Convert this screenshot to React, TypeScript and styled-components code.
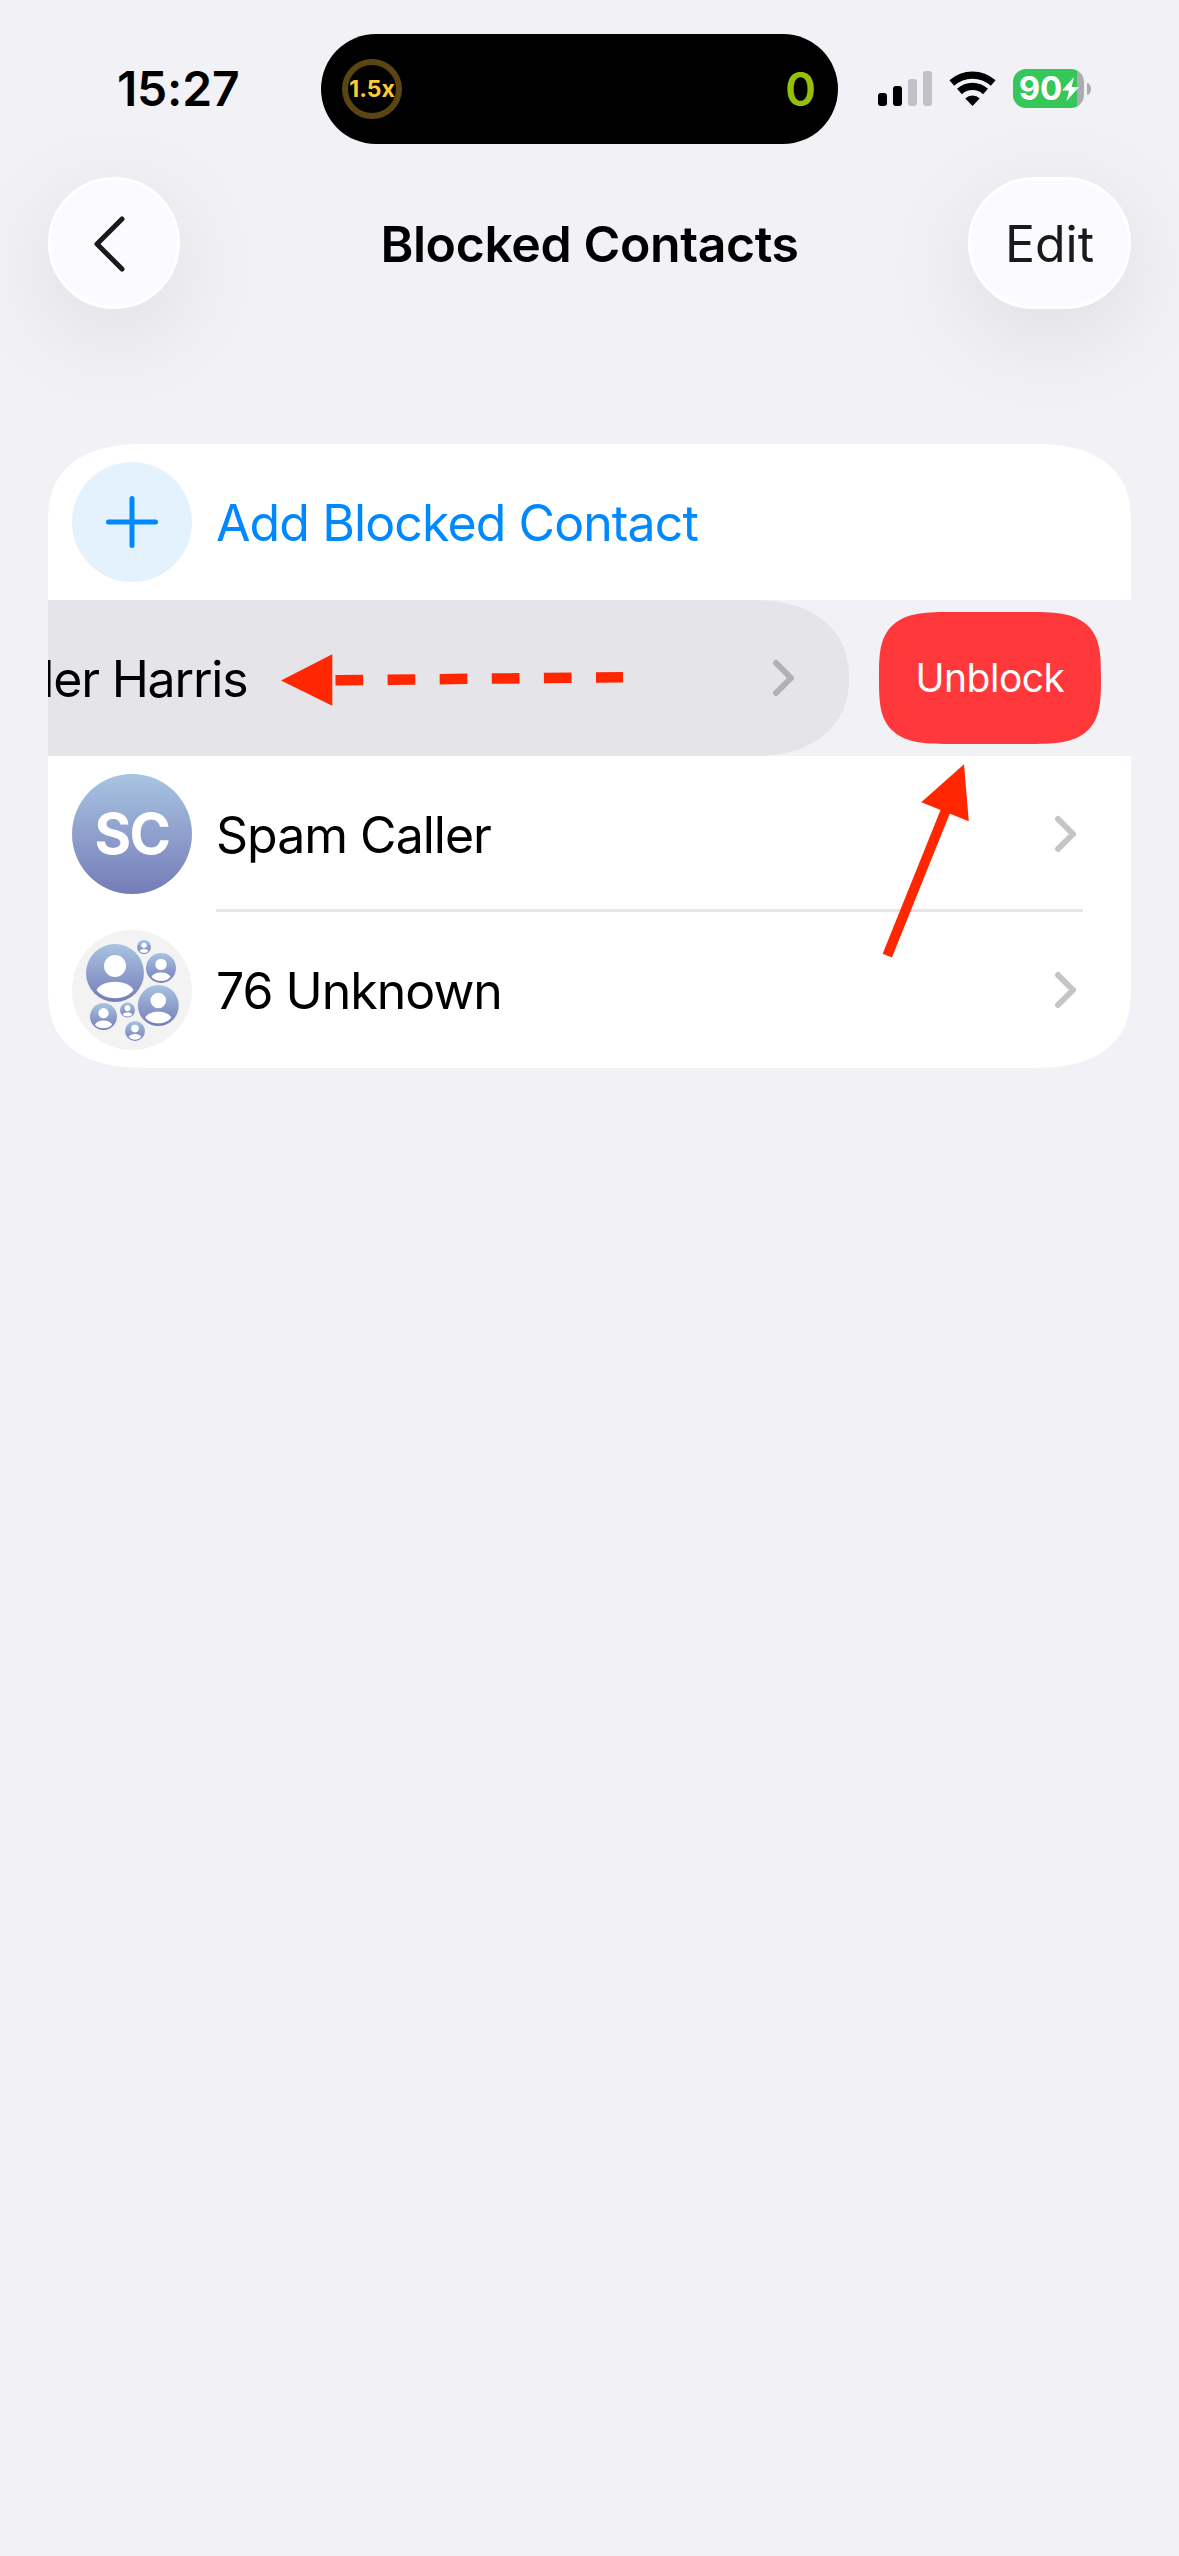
import React from "react";
import styled, { createGlobalStyle } from "styled-components";

const GlobalStyle = createGlobalStyle`
  * { box-sizing: border-box; }
  html, body { margin: 0; padding: 0; background: #f2f1f6; }
  body { font-family: Inter, "Liberation Sans", sans-serif; color: #000; }
`;

const Screen = styled.main`
  position: relative;
  width: 1179px;
  height: 2556px;
  overflow: hidden;
  background: #f2f1f6;
`;

const StatusBar = styled.header`
  display: flex;
  align-items: center;
  height: 144px;
  padding: 34px 0 0 117px;
`;

const Clock = styled.time`
  width: 204px;
  font-size: 48px;
  line-height: 58px;
  font-weight: 600;
  padding-bottom: 1px;
  letter-spacing: -0.2px;
`;

const Island = styled.div`
  display: flex;
  align-items: center;
  justify-content: space-between;
  width: 517px;
  height: 110px;
  padding: 0 22px 0 21px;
  border-radius: 55px;
  background: #000;
`;

const SpeedRing = styled.div`
  display: flex;
  align-items: center;
  justify-content: center;
  width: 60px;
  height: 60px;
  border: 6px solid #5b4613;
  border-radius: 50%;
  color: #fdcb2e;
  font-size: 23px;
  font-weight: 700;
`;

const IslandCount = styled.span`
  color: #98bf08;
  font-size: 47px;
  line-height: 58px;
  font-weight: 600;
`;

const StatusIcons = styled.div`
  display: flex;
  align-items: center;
  height: 40px;
  margin: 0 0 1px 40px;
`;

const Signal = styled.div`
  display: flex;
  align-items: flex-end;
  gap: 6px;
  height: 35px;
`;

const Bar = styled.i<{ $h: number; $on: boolean }>`
  width: 9px;
  height: ${(p) => p.$h}px;
  border-radius: 3px;
  background: ${(p) => (p.$on ? "#000" : "#c2c1c7")};
`;

const WifiIcon = styled.svg`
  margin-left: 17px;
`;

const Battery = styled.div`
  display: flex;
  align-items: center;
  justify-content: center;
  width: 71px;
  height: 39px;
  margin-left: 17px;
  padding-left: 1px;
  border-radius: 13px;
  background: linear-gradient(90deg, #35c759 64px, #acabb1 64px);
  color: #fff;
  font-size: 33px;
  line-height: 39px;
  font-weight: 700;
`;

const BatteryTip = styled.i`
  width: 4px;
  height: 12px;
  margin-left: 3px;
  border-radius: 0 4px 4px 0 / 0 6px 6px 0;
  background: #acabb1;
`;

const NavBar = styled.nav`
  display: flex;
  align-items: center;
  justify-content: space-between;
  margin: 33px 48px 0;
  height: 132px;
`;

const GlassButton = styled.button<{ $w: number }>`
  display: flex;
  align-items: center;
  justify-content: center;
  width: ${(p) => p.$w}px;
  height: 132px;
  padding: 2px 0 0;
  border: 3px solid #fff;
  border-radius: 66px;
  background: #fafaff;
  box-shadow: 0 24px 100px rgba(0, 0, 0, 0.09);
  color: #1a191e;
  font-family: inherit;
  font-size: 50px;
  line-height: 60px;
`;

const BackGlyph = styled.svg`
  margin: 0 9px 0 0;
`;

const Title = styled.h1`
  margin: 2px 0 0 31px;
  font-size: 50px;
  line-height: 60px;
  font-weight: 600;
  letter-spacing: -0.4px;
`;

const Card = styled.section`
  display: flex;
  flex-direction: column;
  margin: 135px 48px 0;
  border-radius: 98px / 78px;
  corner-shape: superellipse(1.3);
  overflow: hidden;
  background: #fff;
`;

const Row = styled.div`
  display: flex;
  align-items: center;
  height: 156px;
  padding-left: 24px;
`;

const RowBody = styled.div<{ $line?: boolean }>`
  display: flex;
  align-items: center;
  justify-content: space-between;
  flex: 1;
  height: 156px;
  margin: 0 48px 0 24px;
  padding-right: 7px;
  box-shadow: ${(p) => (p.$line ? "inset 0 -3px #e6e6e6" : "none")};
`;

const Label = styled.span<{ $accent?: boolean; $tight?: boolean }>`
  padding-top: 2px;
  font-size: 50px;
  line-height: 60px;
  letter-spacing: ${(p) => (p.$tight ? "-1.2px" : p.$accent ? "-0.9px" : "-1px")};
  white-space: nowrap;
  color: ${(p) => (p.$accent ? "#0088ff" : "#000")};
`;

const Circle = styled.div<{ $bg: string }>`
  display: flex;
  align-items: center;
  justify-content: center;
  flex: none;
  width: 120px;
  height: 120px;
  border-radius: 50%;
  background: ${(p) => p.$bg};
  color: #fff;
  font-size: 56px;
  font-weight: 700;
  letter-spacing: -1.5px;
`;

const SwipeRow = styled.div`
  display: flex;
  align-items: center;
  height: 156px;
  overflow: hidden;
  background: #f2f1f6;
`;

const Swiped = styled.div`
  display: flex;
  align-items: center;
  justify-content: space-between;
  flex: none;
  width: 1083px;
  height: 156px;
  margin-left: -282px;
  padding: 0 55px 0 172.5px;
  border-radius: 0 96px 96px 0 / 0 78px 78px 0;
  corner-shape: superellipse(1.18);
  background: #e5e4e9;
`;

const Unblock = styled.button`
  flex: none;
  width: 222px;
  height: 132px;
  margin-left: 30px;
  padding: 0 0 2px;
  border: 0;
  border-radius: 74px / 66px;
  corner-shape: superellipse(1.7);
  background: #ff383c;
  color: #fff;
  font-family: inherit;
  font-size: 39px;
  letter-spacing: -0.5px;
`;

const Annotations = styled.svg`
  position: absolute;
  left: 0;
  top: 0;
  pointer-events: none;
`;

const Chevron = ({ color = "#c5c5c7" }: { color?: string }) => (
  <svg width="22" height="38" viewBox="0 0 22 38" fill="none" stroke={color} strokeWidth="6" strokeLinecap="round" strokeLinejoin="round">
    <path d="M4 4l15 15L4 34" />
  </svg>
);

const PEOPLE: [number, number, number][] = [
  [43, 43, 29], [72, 17, 7], [89, 38, 15], [86.3, 75.5, 20.5], [31.5, 86.5, 13.5], [55.5, 80, 7.5], [63, 101, 10],
];

const People = () => (
  <svg width="120" height="120" viewBox="0 0 120 120">
    <defs>
      <linearGradient id="person" x1="0" y1="0" x2="0" y2="1">
        <stop offset="0" stopColor="#a8c4e1" />
        <stop offset="1" stopColor="#757cb8" />
      </linearGradient>
    </defs>
    {PEOPLE.map(([x, y, r]) => (
      <g key={`${x}`} transform={`translate(${x} ${y}) scale(${r / 29})`}>
        <circle r="29" fill="url(#person)" />
        <circle cy="-7" r="11" fill="#fff" />
        <path d="M-18.500 17C-13 6 13 6 18.500 17C11 28 -11 28 -18.500 17Z" fill="#fff" />
      </g>
    ))}
  </svg>
);

export default function App() {
  return (
    <Screen>
      <GlobalStyle />
      <StatusBar>
        <Clock>15:27</Clock>
        <Island>
          <SpeedRing>1.5x</SpeedRing>
          <IslandCount>0</IslandCount>
        </Island>
        <StatusIcons>
          <Signal>
            <Bar $h={13} $on />
            <Bar $h={20} $on />
            <Bar $h={27} $on={false} />
            <Bar $h={35} $on={false} />
          </Signal>
          <WifiIcon width="47" height="35" viewBox="0 0 47 35">
            <path d="M2.800 12A31 31 0 0 1 44.200 12M10.500 20.500A19 19 0 0 1 36.500 20.500" fill="none" stroke="#000" strokeWidth="7.200" />
            <path d="M16.300 27.400A10.500 10.500 0 0 1 30.700 27.400L23.500 35Z" />
          </WifiIcon>
          <Battery>
            <span>90</span>
            <svg width="17" height="24" viewBox="0 0 17 24" fill="#fff">
              <path d="M12 0L0 13.500H7L4.500 24L17 10H9.500Z" />
            </svg>
          </Battery>
          <BatteryTip />
        </StatusIcons>
      </StatusBar>
      <NavBar>
        <GlassButton $w={132} aria-label="Back">
          <BackGlyph width="32" height="56" viewBox="0 0 32 56" fill="none" stroke="#1a191e" strokeWidth="5" strokeLinecap="round" strokeLinejoin="round">
            <path d="M28 3L3 28L28 53" />
          </BackGlyph>
        </GlassButton>
        <Title>Blocked Contacts</Title>
        <GlassButton $w={163}>Edit</GlassButton>
      </NavBar>
      <Card>
        <Row>
          <Circle $bg="#e4f2fe">
            <svg width="54" height="54" viewBox="0 0 54 54" stroke="#0088ff" strokeWidth="5" strokeLinecap="round">
              <path d="M27 3.500V50.500M3.500 27H50.500" />
            </svg>
          </Circle>
          <RowBody><Label $accent>Add Blocked Contact</Label></RowBody>
        </Row>
        <SwipeRow>
          <Swiped>
            <Label $tight>Xander Harris</Label>
            <Chevron color="#b1b1b5" />
          </Swiped>
          <Unblock>Unblock</Unblock>
        </SwipeRow>
        <Row>
          <Circle $bg="linear-gradient(#a8c4e1, #757cb8)">SC</Circle>
          <RowBody $line><Label>Spam Caller</Label><Chevron /></RowBody>
        </Row>
        <Row>
          <Circle $bg="#f3f3f3"><People /></Circle>
          <RowBody><Label>76 Unknown</Label><Chevron /></RowBody>
        </Row>
      </Card>
      <Annotations width="1179" height="1100" viewBox="0 0 1179 1100" fill="#ff2600" stroke="#ff2600">
        <path stroke="none" d="M281 680.500L332.300 654.300V705.700Z" />
        <path d="M335.500 680.200L623 677.300" strokeWidth="10.500" strokeDasharray="27.700 24.400" />
        <path stroke="none" d="M964 764.300L921.300 802.300L968.800 821.200Z" />
        <path d="M887.300 955.700L945.500 811" strokeWidth="10" />
      </Annotations>
    </Screen>
  );
}
